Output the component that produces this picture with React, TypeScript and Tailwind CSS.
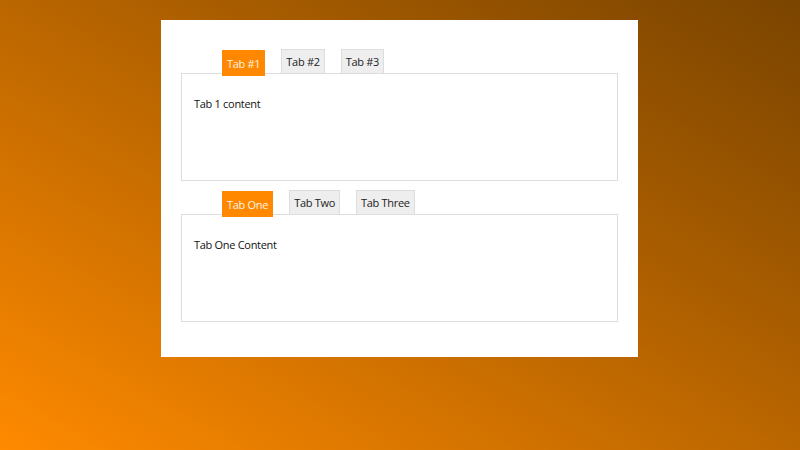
import { useState } from "react"

interface TabSetProps {
  tabs: { label: string; content: string }[]
}

function TabSet({ tabs }: TabSetProps) {
  const [active, setActive] = useState(0)
  return (
    <div>
      <div className="flex h-[24px] items-start gap-[16px] pl-[41px]">
        {tabs.map((t, i) =>
          i === active ? (
            <button
              key={t.label}
              onClick={() => setActive(i)}
              className="relative z-10 mt-[1px] h-[26px] bg-[#ff8800] px-[5px] pt-[2px] text-[11px] tracking-[-0.3px] text-[#fff4e0]"
            >
              {t.label}
            </button>
          ) : (
            <button
              key={t.label}
              onClick={() => setActive(i)}
              className="h-[24px] border border-b-0 border-[#dddddd] bg-[#eeeeee] px-[4px] pt-[2px] text-[11px] tracking-[-0.3px] text-[#222]"
            >
              {t.label}
            </button>
          )
        )}
      </div>
      <div className="h-[108px] border border-[#dddddd] bg-white px-[12px] pt-[22px] text-[11px] tracking-[-0.3px] text-[#111]">
        {tabs[active].content}
      </div>
    </div>
  )
}

export default function App() {
  return (
    <div
      className="flex h-[450px] w-[800px] items-start bg-gradient-to-tr from-[#ff8a00] to-[#7a4400] pl-[161px] pt-[20px]"
      style={{ fontFamily: '"Open Sans", sans-serif' }}
    >
      <div className="flex w-[477px] flex-col gap-[9px] bg-white px-[20px] pb-[35px] pt-[29px]">
        <TabSet
          tabs={[
            { label: "Tab #1", content: "Tab 1 content" },
            { label: "Tab #2", content: "Tab 2 content" },
            { label: "Tab #3", content: "Tab 3 content" },
          ]}
        />
        <TabSet
          tabs={[
            { label: "Tab One", content: "Tab One Content" },
            { label: "Tab Two", content: "Tab Two Content" },
            { label: "Tab Three", content: "Tab Three Content" },
          ]}
        />
      </div>
    </div>
  )
}
